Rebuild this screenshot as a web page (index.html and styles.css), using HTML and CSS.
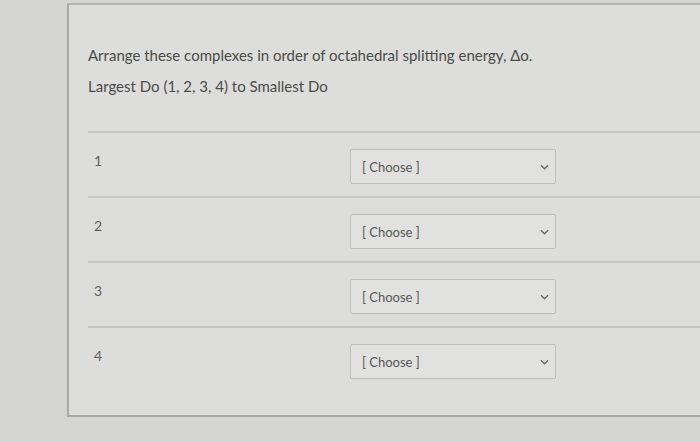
FILE: index.html
```html
<!DOCTYPE html>
<html>
<head>
<meta charset="utf-8">
<link rel="stylesheet" href="styles.css">
</head>
<body>
<div class="card">
  <div class="question">
    <p class="q-line">Arrange these complexes in order of octahedral splitting energy, Δo.</p>
    <p class="q-line">Largest Do (1, 2, 3, 4) to Smallest Do</p>
  </div>
  <div class="rows">
    <div class="row">
      <span class="num">1</span>
      <div class="select"><span>[ Choose ]</span><svg class="chev" viewBox="0 0 10 6" width="9" height="6"><path d="M1 1 L5 5 L9 1" fill="none" stroke="#666" stroke-width="1.4"/></svg></div>
    </div>
    <div class="row">
      <span class="num">2</span>
      <div class="select"><span>[ Choose ]</span><svg class="chev" viewBox="0 0 10 6" width="9" height="6"><path d="M1 1 L5 5 L9 1" fill="none" stroke="#666" stroke-width="1.4"/></svg></div>
    </div>
    <div class="row">
      <span class="num">3</span>
      <div class="select"><span>[ Choose ]</span><svg class="chev" viewBox="0 0 10 6" width="9" height="6"><path d="M1 1 L5 5 L9 1" fill="none" stroke="#666" stroke-width="1.4"/></svg></div>
    </div>
    <div class="row">
      <span class="num">4</span>
      <div class="select"><span>[ Choose ]</span><svg class="chev" viewBox="0 0 10 6" width="9" height="6"><path d="M1 1 L5 5 L9 1" fill="none" stroke="#666" stroke-width="1.4"/></svg></div>
    </div>
  </div>
</div>
</body>
</html>
```

FILE: styles.css
```css
html, body {
  margin: 0;
  padding: 0;
}
body {
  background: #d5d5d3;
  font-family: Lato, "Open Sans", sans-serif;
  width: 700px;
  height: 442px;
  overflow: hidden;
}
.card {
  margin: 3px 0 0 67px;
  height: 414px;
  background: #dddedb;
  border-top: 2px solid #b4b4b2;
  border-left: 2px solid #a9a9a7;
  border-bottom: 2px solid #a9a9a7;
  padding-left: 19px;
  box-sizing: border-box;
}
.question {
  padding-top: 41px;
  height: 126px;
  box-sizing: border-box;
}
.q-line {
  margin: 0 0 13px 0;
  font-size: 15px;
  line-height: 18px;
  color: #4a4a48;
}
.rows {
  display: flex;
  flex-direction: column;
}
.row {
  display: grid;
  grid-template-columns: 262px 206px;
  align-items: start;
  height: 65px;
  border-top: 2px solid #c6c6c4;
  box-sizing: border-box;
}
.num {
  padding: 19px 0 0 6px;
  font-size: 14px;
  line-height: 18px;
  color: #5e5e5c;
}
.select {
  margin-top: 16px;
  height: 35px;
  border: 1px solid #bdbdbb;
  border-radius: 2px;
  background: #e1e2df;
  box-sizing: border-box;
  display: flex;
  align-items: center;
  justify-content: space-between;
  padding: 0 6px 0 11px;
  font-size: 13px;
  color: #575755;
}
.chev {
  display: block;
}
```
